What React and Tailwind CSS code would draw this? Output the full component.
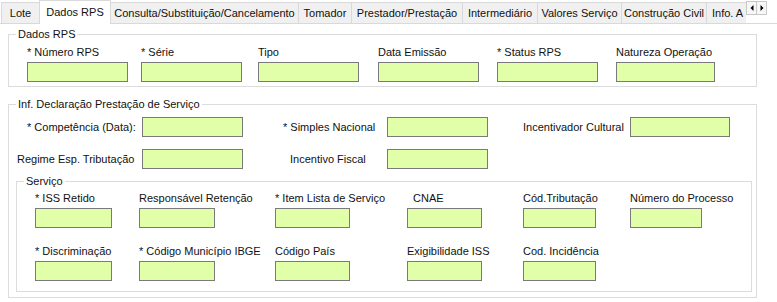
import React from "react";

const tabs = [
  { label: "Lote", w: "w-[39px]" },
  { label: "Dados RPS", w: "w-[72px]", active: true },
  { label: "Consulta/Substituição/Cancelamento", w: "w-[189px]" },
  { label: "Tomador", w: "w-[54px]" },
  { label: "Prestador/Prestação", w: "w-[112px]" },
  { label: "Intermediário", w: "w-[76px]" },
  { label: "Valores Serviço", w: "w-[85px]" },
  { label: "Construção Civil", w: "w-[86px]" },
];

function Box({ w = "w-[101px]" }) {
  return <div className={`${w} h-[20px] shrink-0 bg-[#e1fea8] border border-[#7a7a7a]`} />;
}

function Field({ label, col, box, labelPad = "" }) {
  return (
    <div className={`${col} shrink-0 flex flex-col`}>
      <span className={`h-[13px] leading-[13px] whitespace-nowrap ${labelPad}`}>{label}</span>
      <div className="mt-[3px]">
        <Box w={box} />
      </div>
    </div>
  );
}

function Group({ title, className = "", children }) {
  return (
    <fieldset className={`border border-[#dcdcdc] ${className}`}>
      <legend className="ml-[7px] px-[2px] leading-[13px] h-[13px]">{title}</legend>
      {children}
    </fieldset>
  );
}

function ScrollBtn({ dir }) {
  return (
    <div className="w-[11px] h-[14px] shrink-0 bg-[#f7f7f7] border border-[#c8c8c8] flex items-center justify-center">
      <svg width="4" height="6" viewBox="0 0 4 6">
        {dir === "left" ? (
          <polygon points="3.5,0 3.5,6 0.5,3" fill="#000" />
        ) : (
          <polygon points="0.5,0 0.5,6 3.5,3" fill="#000" />
        )}
      </svg>
    </div>
  );
}

export default function App() {
  return (
    <div
      className="w-[777px] h-[302px] bg-white text-[11px] text-[#111] overflow-hidden"
      style={{ fontFamily: '"Liberation Sans", Arial, sans-serif' }}
    >
      {/* tab strip */}
      <div className="h-[24px] flex items-end pl-[2px] border-b border-[#d9d9d9]">
        {tabs.map((t) =>
          t.active ? (
            <div
              key={t.label}
              className={`${t.w} shrink-0 h-[24px] -mb-px -ml-px bg-white border border-b-0 border-[#d9d9d9] flex items-start pt-[3px] justify-center relative z-10 whitespace-nowrap`}
            >
              {t.label}
            </div>
          ) : (
            <div
              key={t.label}
              className={`${t.w} shrink-0 h-[21px] -ml-px bg-[#f0f0f0] border border-b-0 border-[#d9d9d9] flex items-center justify-center whitespace-nowrap`}
            >
              {t.label}
            </div>
          )
        )}
        <div className="w-[40px] shrink-0 h-[21px] -ml-px bg-[#f0f0f0] border-t border-l border-[#d9d9d9] flex items-center pl-[5px] whitespace-nowrap">
          Info. A
        </div>
        <div className="self-start mt-[1px] flex shrink-0">
          <ScrollBtn dir="left" />
          <div className="-ml-px">
            <ScrollBtn dir="right" />
          </div>
        </div>
      </div>

      {/* Dados RPS */}
      <Group title="Dados RPS" className="ml-[8px] mt-[4px] w-[749px] pb-[4px]">
        <div className="flex pl-[18px] mt-[5px]">
          <Field label="* Número RPS" col="w-[114px]" />
          <Field label="* Série" col="w-[117px]" />
          <Field label="Tipo" col="w-[120px]" />
          <Field label="Data Emissão" col="w-[119px]" />
          <Field label="* Status RPS" col="w-[119px]" />
          <Field label="Natureza Operação" col="w-[110px]" box="w-[99px]" />
        </div>
      </Group>

      {/* Inf. Declaração */}
      <Group
        title="Inf. Declaração Prestação de Serviço"
        className="ml-[8px] mt-[11px] w-[749px] pb-[5px]"
      >
        <div className="flex items-center mt-[6px]">
          <span className="w-[133px] shrink-0 pl-[18px] whitespace-nowrap">* Competência (Data):</span>
          <Box />
          <span className="w-[144px] shrink-0 pl-[40px] whitespace-nowrap">* Simples Nacional</span>
          <Box />
          <span className="w-[142px] shrink-0 pl-[35px] whitespace-nowrap">Incentivador Cultural</span>
          <Box w="w-[100px]" />
        </div>
        <div className="flex items-center mt-[12px]">
          <span className="w-[133px] shrink-0 pl-[8px] whitespace-nowrap">Regime Esp. Tributação</span>
          <Box />
          <span className="w-[144px] shrink-0 pl-[47px] whitespace-nowrap">Incentivo Fiscal</span>
          <Box />
        </div>

        <Group title="Serviço" className="ml-[7px] mr-[4px] mt-[6px] pb-[10px]">
          <div className="flex pl-[18px] mt-[4px]">
            <Field label="* ISS Retido" col="w-[104px]" box="w-[77px]" />
            <Field label="Responsável Retenção" col="w-[136px]" box="w-[76px]" />
            <Field label="* Item Lista de Serviço" col="w-[132px]" box="w-[75px]" />
            <Field label="CNAE" col="w-[116px]" box="w-[75px]" labelPad="pl-[6px]" />
            <Field label="Cód.Tributação" col="w-[107px]" box="w-[73px]" />
            <Field label="Número do Processo" col="w-[110px]" box="w-[72px]" />
          </div>
          <div className="flex pl-[18px] mt-[17px]">
            <Field label="* Discriminação" col="w-[104px]" box="w-[77px]" />
            <Field label="* Código Município IBGE" col="w-[136px]" box="w-[76px]" />
            <Field label="Código País" col="w-[132px]" box="w-[75px]" />
            <Field label="Exigibilidade ISS" col="w-[116px]" box="w-[75px]" />
            <Field label="Cod. Incidência" col="w-[107px]" box="w-[73px]" />
          </div>
        </Group>
      </Group>
    </div>
  );
}
